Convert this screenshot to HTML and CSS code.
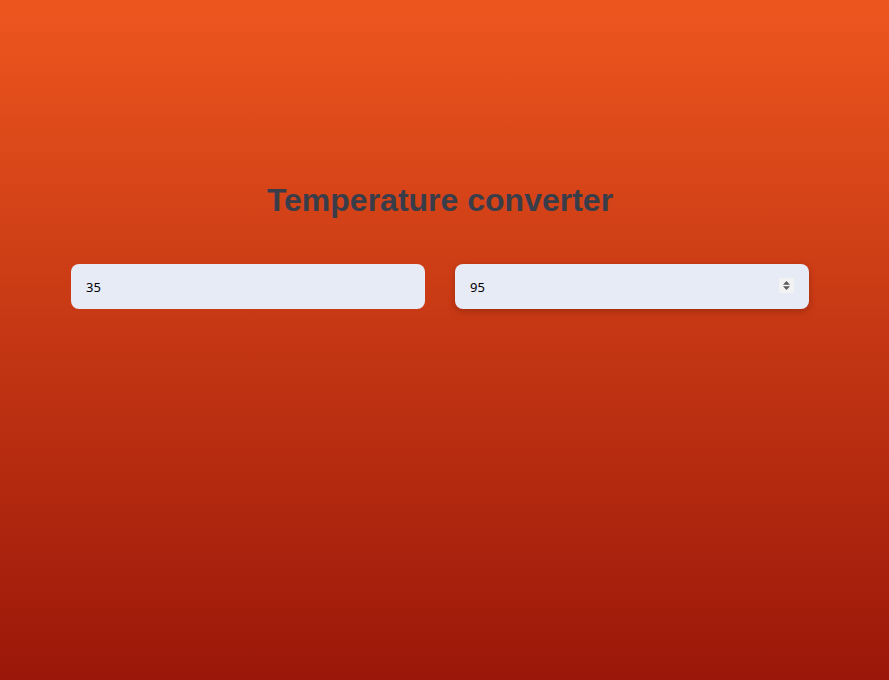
FILE: index.html
```html
<!DOCTYPE html>
<html lang="en">
<head>
<meta charset="utf-8">
<title>Temperature converter</title>
<link rel="stylesheet" href="styles.css">
</head>
<body>
<main class="page">
  <h1 class="title">Temperature converter</h1>
  <div class="fields">
    <input class="field" type="text" value="35" aria-label="Celsius">
    <div class="field-wrap">
      <input class="field field-active" type="number" value="95" aria-label="Fahrenheit" autofocus>
      <span class="spinner" aria-hidden="true">
        <svg width="15" height="15" viewBox="0 0 15 15">
          <path d="M7.5 3 L11 6.8 L4 6.8 Z" fill="#5a5a5a"/>
          <path d="M4 8.2 L11 8.2 L7.5 12 Z" fill="#5a5a5a"/>
        </svg>
      </span>
    </div>
  </div>
</main>
</body>
</html>
```

FILE: styles.css
```css
html, body {
  margin: 0;
  padding: 0;
  height: 100%;
}
body {
  background: linear-gradient(to bottom, #ed561e 0%, #9b1709 100%);
  font-family: "Liberation Sans", Arial, sans-serif;
}
.page {
  width: 738px;
  margin-left: 71px;
  padding-top: 182px;
}
.title {
  margin: 0;
  text-align: center;
  font-size: 32px;
  font-weight: 700;
  line-height: 37px;
  color: #393d4a;
}
.fields {
  display: grid;
  grid-template-columns: 1fr 1fr;
  gap: 30px;
  margin-top: 45px;
}
.field-wrap {
  position: relative;
}
.field {
  box-sizing: border-box;
  height: 45px;
  width: 100%;
  border: none;
  border-radius: 8px;
  background: #e6ebf5;
  padding: 0 14px 0 15px;
  font-family: "Noto Sans", sans-serif;
  font-size: 13px;
  color: #000;
  outline: none;
  display: block;
}
.field-active {
  box-shadow: 0 2px 6px rgba(80, 20, 0, 0.35);
  -moz-appearance: textfield;
  caret-color: #000;
}
.field-active::-webkit-inner-spin-button,
.field-active::-webkit-outer-spin-button {
  -webkit-appearance: none;
  margin: 0;
}
.spinner {
  position: absolute;
  right: 15px;
  top: 14px;
  width: 15px;
  height: 15px;
  background: #f2f2f3;
  display: block;
  pointer-events: none;
}
.spinner svg {
  display: block;
}
```
